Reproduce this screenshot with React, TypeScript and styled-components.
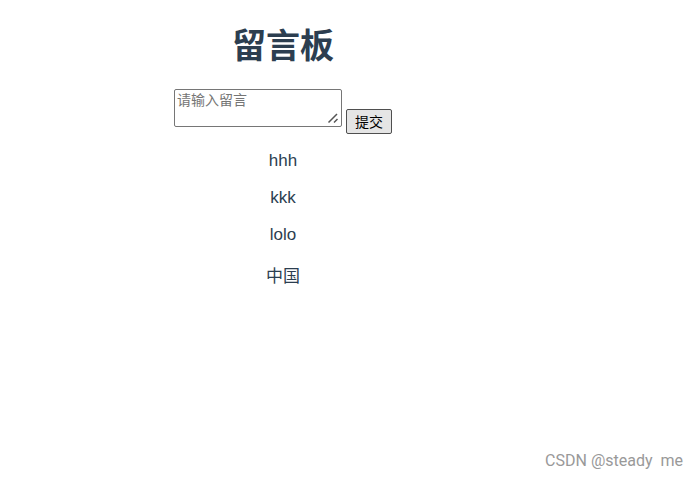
import { FormEvent, useState } from "react";
import styled, { createGlobalStyle } from "styled-components";

// ------------------------------------- STYLES -------------------------------------

const GlobalStyle = createGlobalStyle`
  body {
    margin: 0;
    background-color: #fff;
    color: #2c3e50;
    font-family: "Liberation Sans", "Noto Sans CJK SC", sans-serif;
    font-size: 17px;
  }
`;

const Page = styled.div`
  box-sizing: border-box;
  display: flex;
  flex-direction: column;
  min-height: 100vh;
  padding: 21px 14px 6px 0;
`;

const Board = styled.main`
  flex: 1;
  margin-right: 117px;
  text-align: center;
`;

const Title = styled.h1`
  margin: 0 0 18px;
  font-size: 34px;
  line-height: 50px;
  font-weight: 700;
`;

const Form = styled.form`
  display: flex;
  justify-content: center;
  align-items: flex-end;
  gap: 4px;
  height: 45px;
`;

const MessageInput = styled.textarea`
  box-sizing: border-box;
  align-self: flex-start;
  width: 168px;
  height: 38px;
  margin: 0;
  padding: 2px;
  border: 1px solid #767676;
  border-radius: 2px;
  overflow: auto;
  font-family: inherit;
  font-size: 14px;
  line-height: 17px;

  &::placeholder {
    color: #757575;
  }

  &::-webkit-resizer {
    background: url("data:image/svg+xml,%3Csvg xmlns='http://www.w3.org/2000/svg' width='15' height='15'%3E%3Cpath d='M2.5 11.5L11 3M8 11.5L11.5 8' fill='none' stroke='%23555' stroke-width='1.5'/%3E%3C/svg%3E")
      no-repeat right bottom;
  }
`;

const SubmitButton = styled.button`
  box-sizing: border-box;
  height: 25px;
  margin: 0;
  padding: 0 8px;
  border: 1px solid #4f4f4f;
  border-radius: 2px;
  background-color: #e5e5e5;
  color: #000;
  font-family: inherit;
  font-size: 14px;
  line-height: 24px;
`;

const MessageList = styled.ul`
  display: flex;
  flex-direction: column;
  gap: 17px;
  margin: 17px 0 0;
  padding: 0;
  list-style: none;
`;

const Message = styled.li`
  min-height: 20px;
  line-height: normal;
`;

const Watermark = styled.footer`
  color: #999;
  font-family: Roboto, "Liberation Sans", sans-serif;
  font-size: 16px;
  line-height: 22px;
  text-align: right;
  white-space: pre;
`;

// ------------------------------------- COMPONENT -------------------------------------

const App = () => {
  const [messages, setMessages] = useState(["hhh", "kkk", "lolo", "中国"]);
  const [text, setText] = useState("");

  const onSubmit = (event: FormEvent) => {
    event.preventDefault();
    if (!text.trim()) return;

    setMessages([...messages, text]);
    setText("");
  };

  return (
    <Page lang="zh-CN">
      <GlobalStyle />
      <Board>
        <Title>留言板</Title>

        <Form onSubmit={onSubmit}>
          <MessageInput
            aria-label="请输入留言"
            placeholder="请输入留言"
            value={text}
            onChange={(event) => setText(event.target.value)}
          />
          <SubmitButton type="submit">提交</SubmitButton>
        </Form>

        <MessageList>
          {messages.map((message, index) => (
            <Message key={index}>{message}</Message>
          ))}
        </MessageList>
      </Board>

      <Watermark>CSDN @steady  me</Watermark>
    </Page>
  );
};

export default App;
